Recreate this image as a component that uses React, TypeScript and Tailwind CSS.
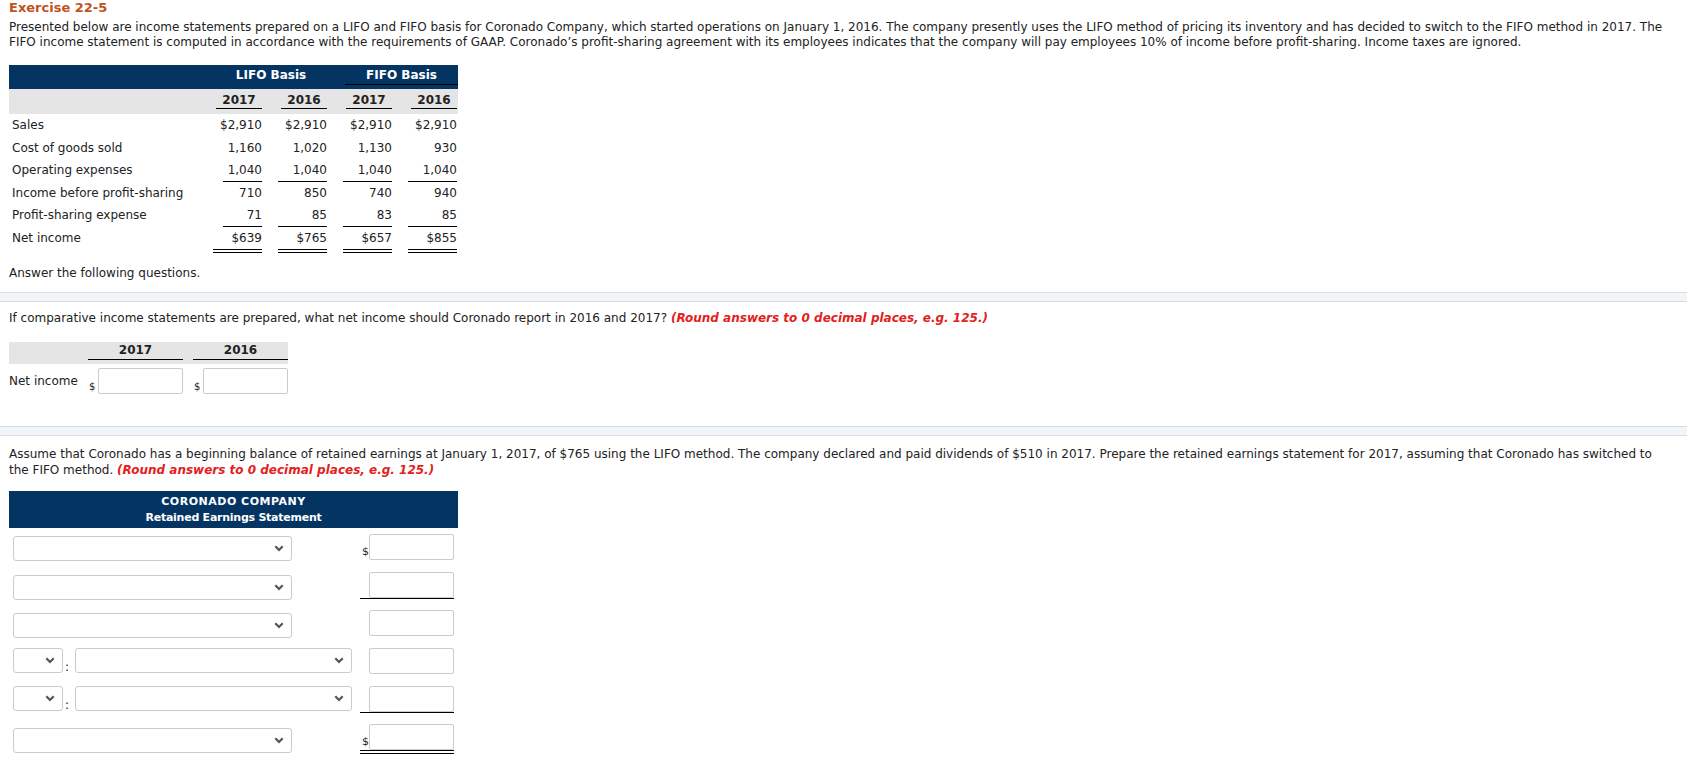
import React from "react";

const rows = [
  { label: "Sales", v: ["$2,910", "$2,910", "$2,910", "$2,910"], line: "" },
  { label: "Cost of goods sold", v: ["1,160", "1,020", "1,130", "930"], line: "" },
  { label: "Operating expenses", v: ["1,040", "1,040", "1,040", "1,040"], line: "single" },
  { label: "Income before profit-sharing", v: ["710", "850", "740", "940"], line: "" },
  { label: "Profit-sharing expense", v: ["71", "85", "83", "85"], line: "single" },
  { label: "Net income", v: ["$639", "$765", "$657", "$855"], line: "" },
];

function Chevron() {
  return (
    <svg width="10" height="7" viewBox="0 0 10 7">
      <path d="M1.3 1.3l3.7 3.7 3.7-3.7" stroke="#555" strokeWidth="2.2" fill="none" />
    </svg>
  );
}

function Dropdown({ className }: { className: string }) {
  return (
    <div className={`h-[25px] border border-[#cbcbcb] rounded-[3px] bg-white flex items-center justify-end pr-[7px] ${className}`}>
      <Chevron />
    </div>
  );
}

function Box() {
  return <div className="w-[85px] h-[26px] border border-[#cbcbcb] rounded-[2px] bg-white" />;
}

function Separator() {
  return <div className="h-[10px] border-y border-[#d6dce4] bg-[#f3f6f9]" />;
}

export default function App() {
  return (
    <div className="w-[1687px] min-h-[770px] bg-white text-[#222] text-[12px] font-['DejaVu_Sans',Verdana,sans-serif]">
      <div className="px-[9px]">
        <h1 className="text-[13px] leading-[16px] font-bold text-[#c1521d]">Exercise 22-5</h1>
        <p className="mt-[4px] leading-[15px]">
          Presented below are income statements prepared on a LIFO and FIFO basis for Coronado Company, which started operations on January 1, 2016. The company presently uses the LIFO method of pricing its inventory and has decided to switch to the FIFO method in 2017. The FIFO income statement is computed in accordance with the requirements of GAAP. Coronado’s profit-sharing agreement with its employees indicates that the company will pay employees 10% of income before profit-sharing. Income taxes are ignored.
        </p>

        {/* income statements */}
        <div className="mt-[15px] w-[449px] grid grid-cols-[189px_65px_65px_65px_65px]">
          <div className="h-[24px] bg-[#043462]" />
          <div className="col-span-2 h-[24px] bg-[#043462] pl-[17px] pr-[1px]">
            <div className="h-[20px] flex items-center justify-center text-white font-bold">LIFO Basis</div>
          </div>
          <div className="col-span-2 h-[24px] bg-[#043462] pl-[17px]">
            <div className="h-[20px] flex items-center justify-center text-white font-bold border-b border-black">FIFO Basis</div>
          </div>

          <div className="h-[25px] bg-[#e5e5e5]" />
          {["2017", "2016", "2017", "2016"].map((y, i) => (
            <div key={i} className="h-[25px] bg-[#e5e5e5] pl-[18px] pr-[1px] pt-[3px]">
              <div className="h-[17px] text-center font-bold border-b border-black leading-[16px]">{y}</div>
            </div>
          ))}

          {rows.map((r) => (
            <React.Fragment key={r.label}>
              <div className="h-[22.5px] pl-[3px] flex items-center">{r.label}</div>
              {r.v.map((val, i) => (
                <div key={i} className={`h-[22.5px] pr-[1px] ${i === 0 ? "pl-[25px]" : "pl-[15px]"}`}>
                  <div className={`h-full flex items-center justify-end ${r.line === "single" ? "border-b border-black" : ""}`}>{val}</div>
                </div>
              ))}
            </React.Fragment>
          ))}
          <div />
          {[0, 1, 2, 3].map((i) => (
            <div key={i} className="pr-[1px] pl-[15px]">
              <div className="h-[4px] border-y border-black" />
            </div>
          ))}
        </div>

        <p className="mt-[13px] leading-[14px]">Answer the following questions.</p>
      </div>

      <div className="mt-[12px]">
        <Separator />
      </div>

      <div className="px-[9px]">
        <p className="mt-[9px] leading-[14px]">
          If comparative income statements are prepared, what net income should Coronado report in 2016 and 2017?{" "}
          <span className="text-[#e3211c] font-bold italic">(Round answers to 0 decimal places, e.g. 125.)</span>
        </p>

        <div className="mt-[17px] w-[279px] grid grid-cols-[79px_95px_10px_95px]">
          <div className="h-[22px] bg-[#e5e5e5]" />
          <div className="h-[22px] bg-[#e5e5e5] pt-[1px]">
            <div className="h-[17px] text-center font-bold border-b border-black leading-[15px]">2017</div>
          </div>
          <div className="h-[22px] bg-[#e5e5e5]" />
          <div className="h-[22px] bg-[#e5e5e5] pt-[1px]">
            <div className="h-[17px] text-center font-bold border-b border-black leading-[15px]">2016</div>
          </div>

          <div className="h-[30px] flex items-center pt-[3px]">Net income</div>
          <div className="h-[30px] flex items-end">
            <span className="w-[10px] pl-[1px] text-[10px] leading-[12px] mb-[1px]">$</span>
            <Box />
          </div>
          <div />
          <div className="h-[30px] flex items-end">
            <span className="w-[10px] pl-[1px] text-[10px] leading-[12px] mb-[1px]">$</span>
            <Box />
          </div>
        </div>
      </div>

      <div className="mt-[32px]">
        <Separator />
      </div>

      <div className="px-[9px]">
        <p className="mt-[10px] leading-[16px] w-[1656px]">
          Assume that Coronado has a beginning balance of retained earnings at January 1, 2017, of $765 using the LIFO method. The company declared and paid dividends of $510 in 2017. Prepare the retained earnings statement for 2017, assuming that Coronado has switched to the FIFO method.{" "}
          <span className="text-[#e3211c] font-bold italic">(Round answers to 0 decimal places, e.g. 125.)</span>
        </p>

        {/* retained earnings statement */}
        <div className="mt-[13px] w-[449px]">
          <div className="h-[37px] bg-[#043462] text-white font-bold text-[11px] leading-[16px] flex flex-col items-center justify-center">
            <div className="tracking-[0.5px]">CORONADO COMPANY</div>
            <div className="tracking-[-0.25px]">Retained Earnings Statement</div>
          </div>

          {[
            { kind: "wide", sel: "mt-[2px]", dollar: true, line: "" },
            { kind: "wide", sel: "mt-[3px]", dollar: false, line: "single" },
            { kind: "wide", sel: "mt-[3px]", dollar: false, line: "" },
            { kind: "split", sel: "", dollar: false, line: "" },
            { kind: "split", sel: "", dollar: false, line: "single" },
            { kind: "wide", sel: "mt-[4px]", dollar: true, line: "double" },
          ].map((row, i) => (
            <div key={i} className={`grid grid-cols-[351px_98px] ${i === 0 ? "mt-[5px]" : ""} h-[38px]`}>
              <div className="pl-[4px] pt-[1px]">
                {row.kind === "wide" ? (
                  <Dropdown className={`w-[279px] ${row.sel}`} />
                ) : (
                  <div className="flex items-end">
                    <Dropdown className="w-[50px]" />
                    <span className="w-[12px] pl-[2px] leading-[12px]">:</span>
                    <Dropdown className="w-[277px]" />
                  </div>
                )}
              </div>
              <div className="pr-[4px]">
                <div
                  className={`flex items-end pt-[1px] ${
                    row.line === "single" ? "border-b border-black" : row.line === "double" ? "border-b-[4px] border-double border-black" : ""
                  }`}
                >
                  <span className="w-[9px] pl-[2px] text-[11px] leading-[13px] mb-[2px]">{row.dollar ? "$" : ""}</span>
                  <Box />
                </div>
              </div>
            </div>
          ))}
        </div>
      </div>
    </div>
  );
}
